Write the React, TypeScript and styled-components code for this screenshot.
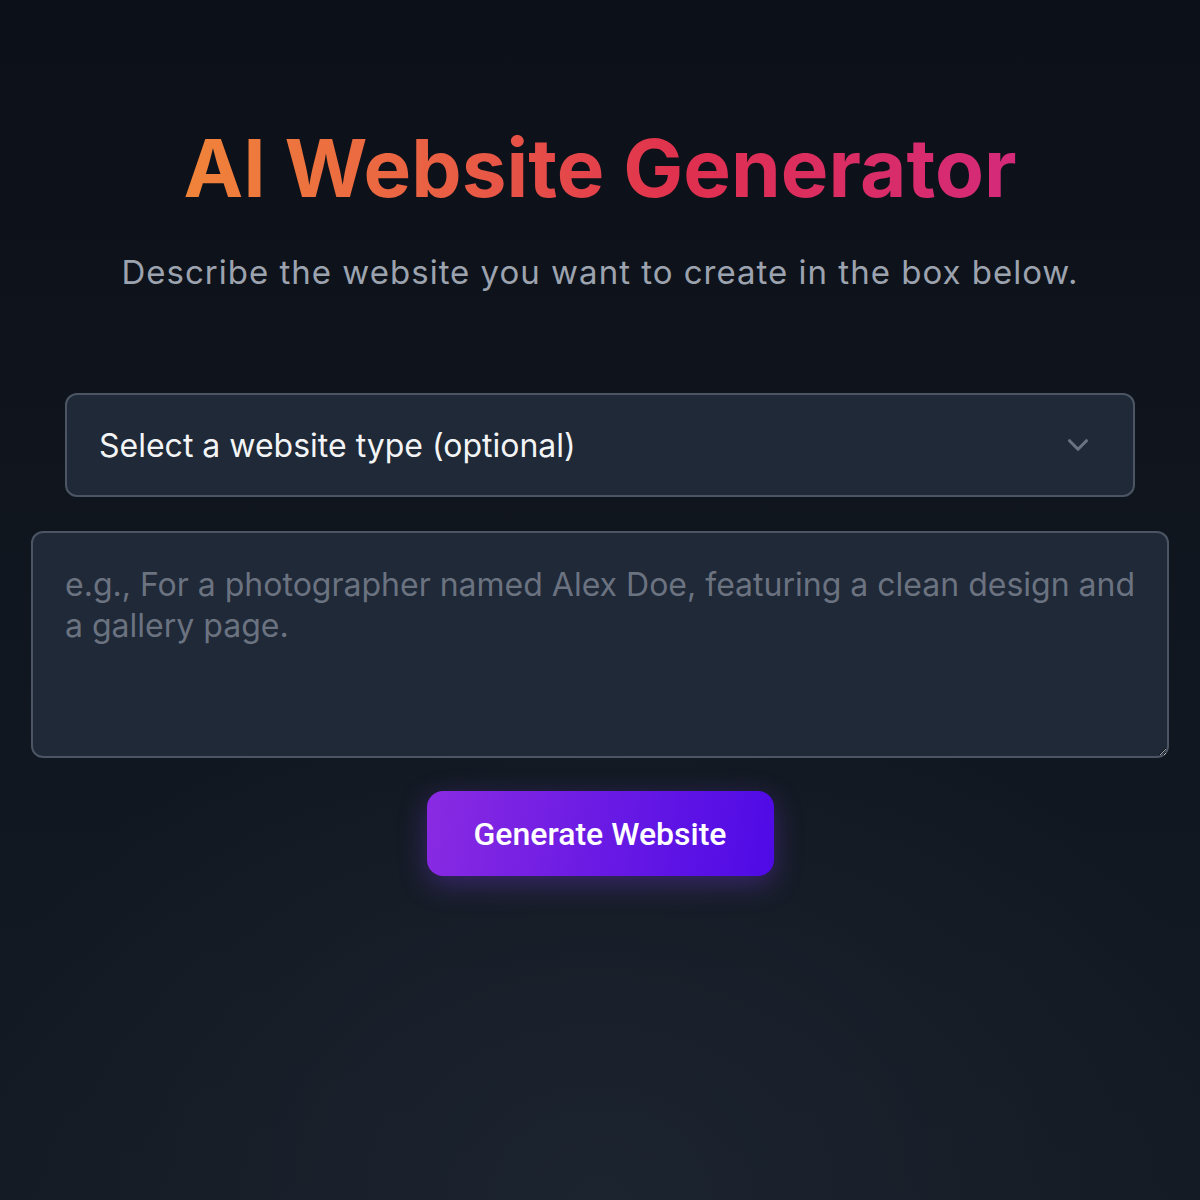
import React from "react";
import styled, { createGlobalStyle } from "styled-components";

const Global = createGlobalStyle`
  html, body { margin: 0; padding: 0; }
  body {
    min-height: 1200px;
    background: #0e131b;
    font-family: Inter, "Noto Sans", sans-serif;
  }
`;

const Page = styled.div`
  min-height: 1200px;
  box-sizing: border-box;
  background:
    radial-gradient(ellipse 55% 45% at 50% 100%, #1c2430 0%, rgba(28,36,48,0) 100%),
    linear-gradient(180deg, #0c1018 0%, #111720 60%, #141a23 100%);
  display: flex;
  flex-direction: column;
  align-items: center;
  padding: 118px 31px 0;
`;

const Title = styled.h1`
  margin: 0;
  font-family: Inter, sans-serif;
  font-weight: 700;
  font-size: 80px;
  line-height: 100px;
  letter-spacing: 0;
  background: linear-gradient(90deg, #f0843a 0%, #e85a45 35%, #e0304f 60%, #d42a7a 100%);
  -webkit-background-clip: text;
  background-clip: text;
  color: transparent;
`;

const Subtitle = styled.p`
  margin: 34px 0 0;
  font-family: Inter, sans-serif;
  font-size: 33px;
  line-height: 40px;
  color: #9ca3af;
  letter-spacing: 1px;
`;

const Form = styled.div`
  width: 100%;
  display: flex;
  flex-direction: column;
  align-items: center;
  margin-top: 101px;
`;

const SelectWrap = styled.div`
  position: relative;
  width: calc(100% - 68px);
`;

const Select = styled.select`
  appearance: none;
  width: 100%;
  height: 104px;
  box-sizing: border-box;
  padding: 0 32px;
  border-radius: 12px;
  border: 2px solid #4b5563;
  background: #1f2937;
  color: #f3f4f6;
  font-family: Inter, sans-serif;
  font-size: 32px;
  outline: none;
`;

const Chevron = styled.svg`
  position: absolute;
  right: 40px;
  top: 50%;
  transform: translateY(-50%);
  pointer-events: none;
`;

const TextArea = styled.textarea`
  margin-top: 34px;
  width: 100%;
  height: 227px;
  box-sizing: border-box;
  padding: 31px 30px 27px 32px;
  border-radius: 12px;
  border: 2px solid #4b5563;
  background: #1f2937;
  color: #f3f4f6;
  font-family: Inter, sans-serif;
  font-size: 32px;
  line-height: 41px;
  letter-spacing: 0;
  outline: none;
  resize: vertical;
  &::placeholder { color: #6b7280; }
`;

const Button = styled.button`
  margin-top: 33px;
  width: 347px;
  height: 85px;
  border: none;
  border-radius: 16px;
  background: linear-gradient(100deg, #8a2be2 0%, #6a1ae4 50%, #4e0ae6 100%);
  color: #ffffff;
  font-family: Roboto, sans-serif;
  font-weight: 500;
  font-size: 32px;
  box-shadow: 0 8px 28px rgba(124, 58, 237, 0.35);
  cursor: pointer;
`;

export default function App() {
  return (
    <>
      <Global />
      <Page>
        <Title>AI Website Generator</Title>
        <Subtitle>Describe the website you want to create in the box below.</Subtitle>
        <Form>
          <SelectWrap>
            <Select defaultValue="">
              <option value="">Select a website type (optional)</option>
              <option value="portfolio">Portfolio</option>
              <option value="blog">Blog</option>
              <option value="business">Business</option>
            </Select>
            <Chevron width="34" height="34" viewBox="0 0 24 24" fill="none" stroke="#6b7280" strokeWidth="2.2" strokeLinecap="round" strokeLinejoin="round">
              <path d="M6 9l6 6 6-6" />
            </Chevron>
          </SelectWrap>
          <TextArea placeholder="e.g., For a photographer named Alex Doe, featuring a clean design and a gallery page." />
          <Button>Generate Website</Button>
        </Form>
      </Page>
    </>
  );
}
